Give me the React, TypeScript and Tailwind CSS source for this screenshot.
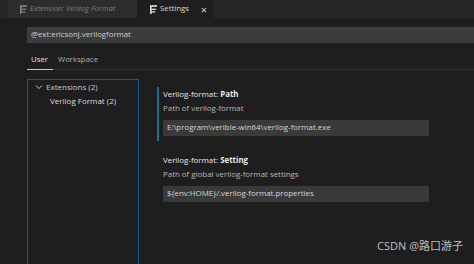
import React from "react";

function FileIcon() {
  return (
    <svg width="7" height="9" viewBox="0 0 8 10" className="shrink-0">
      <rect x="0" y="0" width="2" height="10" fill="currentColor" />
      <rect x="2" y="0" width="6" height="2" fill="currentColor" />
      <rect x="2" y="4" width="5" height="1.5" fill="currentColor" />
      <rect x="2" y="7" width="4" height="1.5" fill="currentColor" />
    </svg>
  );
}

function SettingItem({
  prefix,
  name,
  desc,
  value,
  focused,
}: {
  prefix: string;
  name: string;
  desc: string;
  value: string;
  focused?: boolean;
}) {
  return (
    <div
      className={`border-l-2 pl-[4px] pt-[1px] pb-[5px] ${
        focused ? "border-[#1b6e99]" : "border-transparent"
      }`}
    >
      <div className="text-[7.9px] leading-[13px] text-[#e7e7e7]">
        {prefix}
        <span className="font-bold">{name}</span>
      </div>
      <div className="mt-[1px] text-[7.9px] leading-[13px] text-[#b8b8b8]">{desc}</div>
      <div className="mt-[5px] flex h-[16px] w-[266px] items-center bg-[#3a3a3a] px-[4px] text-[7.9px] text-[#d4d4d4]">
        {value}
      </div>
    </div>
  );
}

export default function App() {
  return (
    <div
      className="relative h-[264px] w-[474px] overflow-hidden bg-[#1e1e1e]"
      style={{ fontFamily: '"Open Sans", "Noto Sans", "Noto Sans CJK SC", sans-serif' }}
    >
      {/* tab bar */}
      <div className="flex h-[18px] bg-[#252526]">
        <div className="ml-[8px] flex w-[129px] items-center gap-[3px] whitespace-nowrap bg-[#2d2d2d] pl-[12px] text-[#7f7f7f]">
          <FileIcon />
          <span className="text-[7.6px] italic">Extension: Verilog Format</span>
        </div>
        <div className="flex w-[76px] items-center whitespace-nowrap bg-[#1e1e1e] pl-[13px] text-[#d8d8d8]">
          <FileIcon />
          <span className="ml-[3px] text-[7.8px]">Settings</span>
          <span className="ml-auto mr-[6px] text-[11px] leading-none">×</span>
        </div>
      </div>

      {/* header */}
      <div className="pl-[27px]">
        <div className="mt-[9px] flex h-[16px] items-center bg-[#3c3c3c] pl-[4px] text-[7.8px] text-[#cccccc]">
          @ext:ericsonj.verilogformat
        </div>
        <div className="mt-[10px] flex h-[17px] items-end gap-[10px] border-b border-[#2e2e2e] pl-[4px] text-[7.8px]">
          <div className="relative pb-[3px] text-[#e0e0e0]">
            User
            <div className="absolute -left-[4px] -right-[5px] bottom-[-1px] h-[1px] bg-[#c8c8c8]" />
          </div>
          <div className="pb-[3px] text-[#b0b0b0]">Workspace</div>
        </div>
      </div>

      {/* body */}
      <div className="mt-[9px] flex pl-[27px]">
        <div className="h-[190px] w-[112px] shrink-0 border border-b-0 border-[#1b5a7c]">
          <div className="flex items-center gap-[3px] pl-[7px] text-[8px] leading-[14px] text-[#c8c8c8]">
            <svg width="8" height="8" viewBox="0 0 8 8">
              <path d="M1 2.5 L4 5.5 L7 2.5" fill="none" stroke="#c8c8c8" strokeWidth="1" />
            </svg>
            Extensions (2)
          </div>
          <div className="pl-[22px] text-[8px] leading-[14px] text-[#dcdcdc]">Verilog Format (2)</div>
        </div>
        <div className="ml-[18px] flex flex-col gap-[12px] pt-[8px]">
          <SettingItem
            prefix="Verilog-format: "
            name="Path"
            desc="Path of verilog-format"
            value="E:\program\verible-win64\verilog-format.exe"
            focused
          />
          <SettingItem
            prefix="Verilog-format: "
            name="Setting"
            desc="Path of global verilog-format settings"
            value="${env:HOME}/.verilog-format.properties"
          />
        </div>
      </div>

      <div className="absolute bottom-[10px] right-[11px] text-[11px] text-[#c0c0c0]">CSDN @路口游子</div>
    </div>
  );
}
